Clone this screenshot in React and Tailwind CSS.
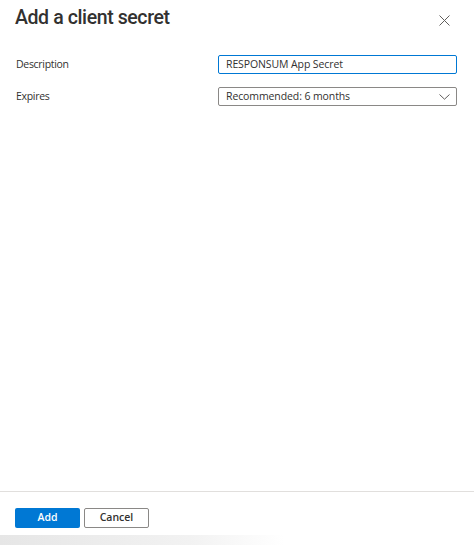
import React from "react";

const SecretPanel = () => {
  return (
    <div
      className="flex h-[545px] w-full flex-col bg-white text-[#323130]"
      style={{ fontFamily: '"Open Sans", "Noto Sans", sans-serif' }}
    >
      <div className="flex items-start justify-between pl-[15px] pr-[24px] pt-[3px]">
        <h1
          className="text-[19.5px] font-medium leading-[30px] tracking-[-0.4px]"
          style={{ fontFamily: 'Roboto, "Open Sans", sans-serif' }}
        >
          Add a client secret
        </h1>
        <button className="mt-[12px] text-[#605e5c]" aria-label="Close">
          <svg width="11" height="11" viewBox="0 0 11 11" fill="none">
            <path d="M0.5 0.5L10.5 10.5M10.5 0.5L0.5 10.5" stroke="currentColor" strokeWidth="1" />
          </svg>
        </button>
      </div>

      <div className="mt-[22px] flex flex-col gap-[13px] pl-[16px] pr-[17px]">
        <div className="flex items-center">
          <label className="w-[202px] text-[10.5px] tracking-[-0.3px]">Description</label>
          <div className="flex h-[19px] flex-1 items-center rounded-[2px] border-[1.5px] border-[#0078d4] px-[7px] text-[10.5px] tracking-[-0.1px]">
            RESPONSUM App Secret
          </div>
        </div>
        <div className="flex items-center">
          <label className="w-[202px] text-[10.5px] tracking-[-0.3px]">Expires</label>
          <div className="flex h-[19px] flex-1 items-center justify-between rounded-[2px] border border-[#8a8886] pl-[7px] pr-[6px] text-[10.5px] tracking-[-0.1px]">
            <span>Recommended: 6 months</span>
            <svg width="11" height="6" viewBox="0 0 11 6" fill="none">
              <path d="M0.5 0.5L5.5 5.2L10.5 0.5" stroke="#605e5c" strokeWidth="1" />
            </svg>
          </div>
        </div>
      </div>

      <div className="flex-1" />

      <div className="border-t border-[#e1dfdd]">
        <div className="flex gap-[4px] pl-[15px] pt-[16px]">
          <button className="h-[20px] w-[65px] rounded-[2px] bg-[#0078d4] text-[10.5px] font-semibold text-white">
            Add
          </button>
          <button className="h-[20px] w-[65px] rounded-[2px] border border-[#8a8886] bg-white text-[10.5px] font-semibold">
            Cancel
          </button>
        </div>
        <div className="mt-[7px] h-[10px] bg-gradient-to-r from-[#e6e6e6] via-[#f2f2f2] via-40% to-white to-60%" />
      </div>
    </div>
  );
};

export default function App() {
  return <SecretPanel />;
}
